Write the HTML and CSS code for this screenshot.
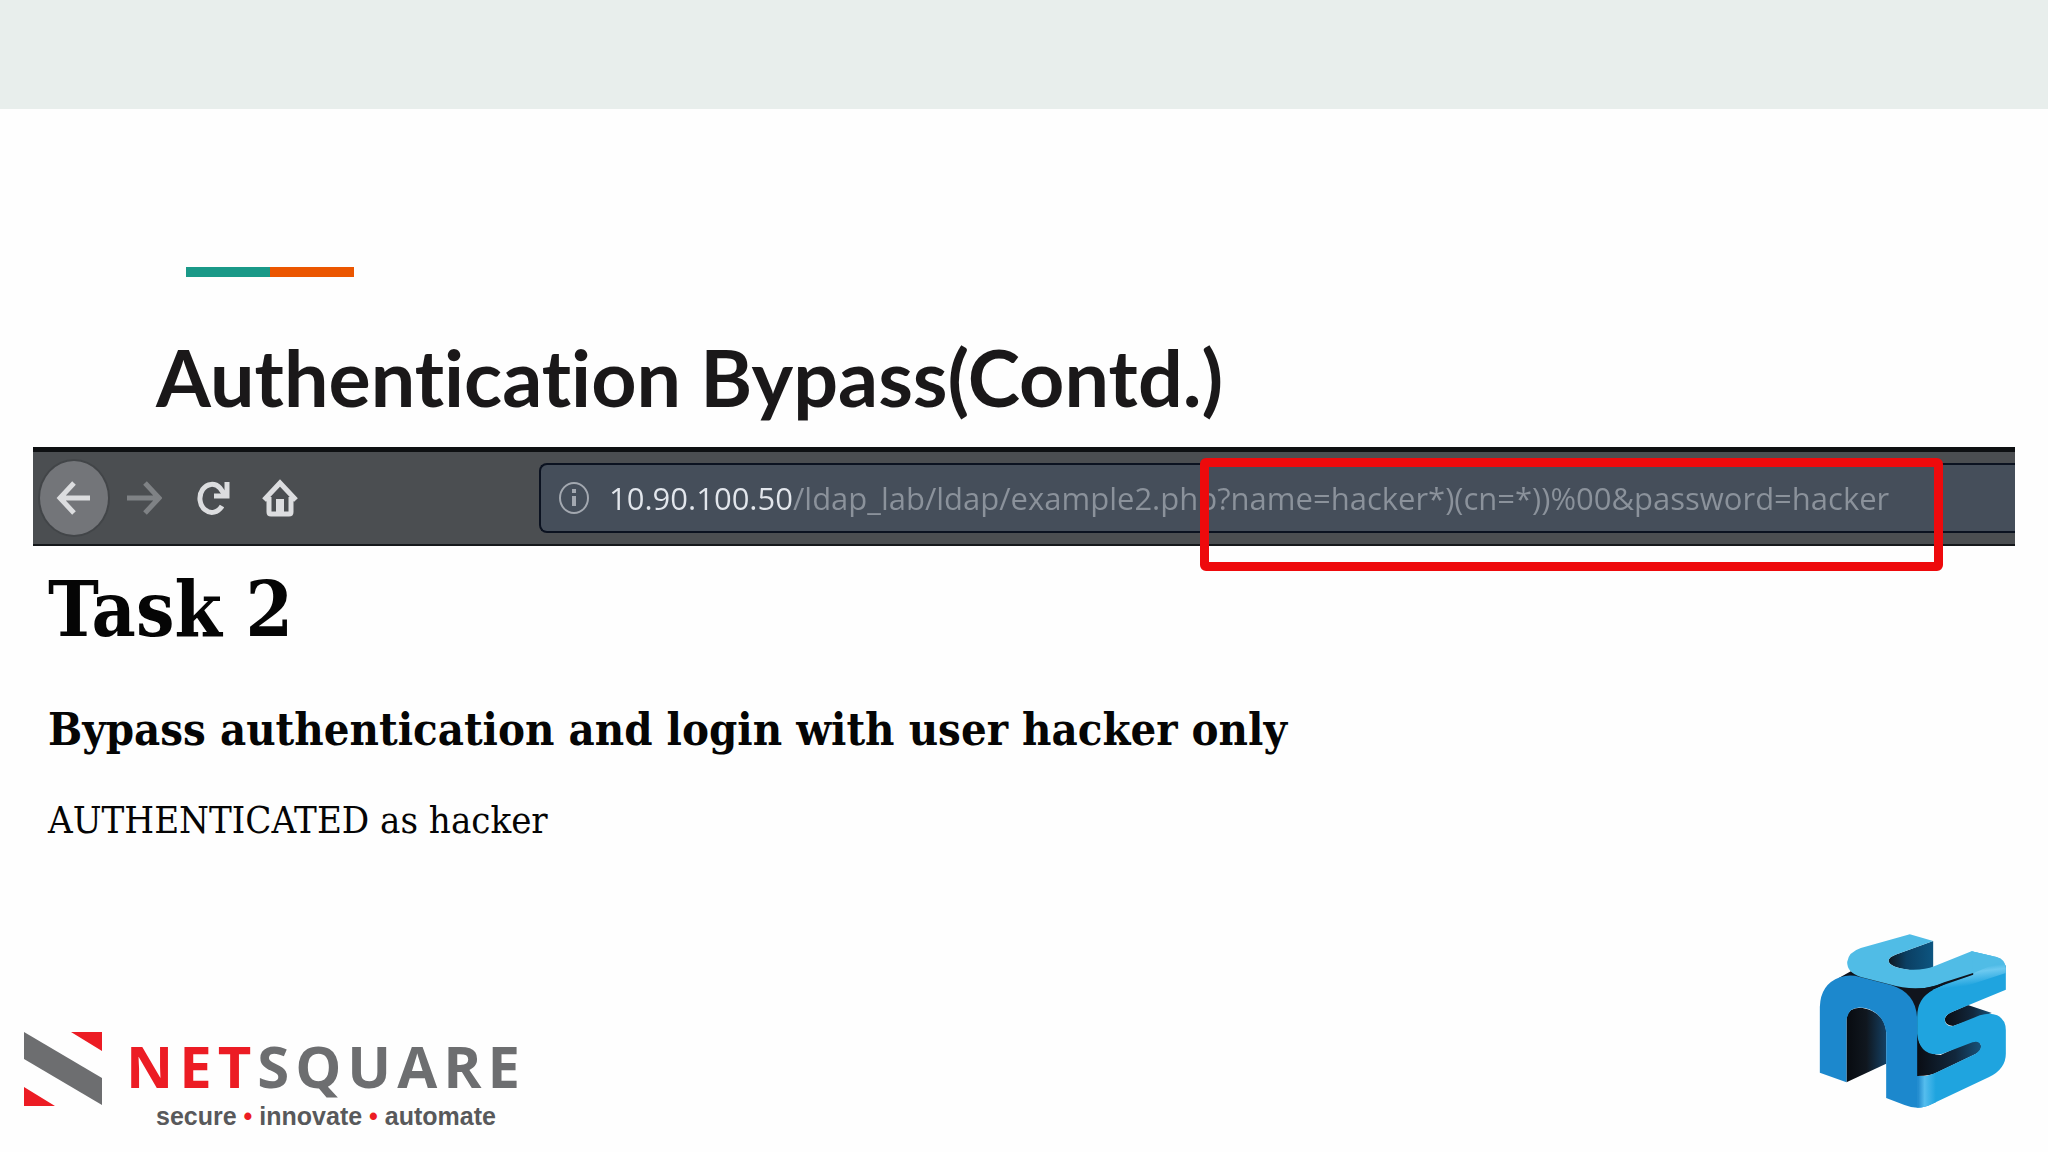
FILE: index.html
```html
<!DOCTYPE html>
<html lang="en">
<head>
  <meta charset="UTF-8">
  <meta name="viewport" content="width=device-width, initial-scale=1.0">
  <title>Authentication Bypass(Contd.)</title>
  <link rel="stylesheet" href="styles.css">
</head>
<body>
  <div class="slide">
    <div class="top-band"></div>

    <header class="slide-header">
      <div class="accent"></div>
      <h1 class="slide-title">Authentication Bypass(Contd.)</h1>
    </header>

    <main class="browser">
      <form class="toolbar">
        <button class="nav-btn back" type="button" aria-label="Back">
          <svg viewBox="0 0 36 36"><path d="M34 18H4M18 3L4 18l14 15"/></svg>
        </button>
        <button class="nav-btn forward" type="button" aria-label="Forward">
          <svg viewBox="0 0 36 36"><path d="M1 18h31M19 3l14 15-14 15"/></svg>
        </button>
        <button class="nav-btn reload" type="button" aria-label="Reload">
          <svg viewBox="0 0 36 36"><path d="M28 26A12 14 0 1 1 26 8l5 7"/><path d="M33 2v14H20"/><path class="solid" d="M33 8v8h-8z"/></svg>
        </button>
        <button class="nav-btn home" type="button" aria-label="Home">
          <svg viewBox="0 0 36 36"><path d="M2 20L18 3l16 17M7 17v15q0 2 2 2h18q2 0 2-2V17"/><path class="solid" d="M14 19h8v16h-8z"/></svg>
        </button>
        <div class="url-box">
          <svg class="info" viewBox="0 0 34 36"><ellipse cx="17" cy="18" rx="14" ry="15"/><path d="M17 16v10M17 9v4"/></svg>
          <input class="url-input" type="text" aria-label="Address" value="10.90.100.50/ldap_lab/ldap/example2.php?name=hacker*)(cn=*))%00&amp;password=hacker">
        </div>
      </form>
      <div class="highlight"></div>

      <section class="page">
        <h2 class="page-title">Task 2</h2>
        <h3 class="page-subtitle">Bypass authentication and login with user hacker only</h3>
        <p class="page-text">AUTHENTICATED as hacker</p>
      </section>
    </main>

    <footer class="slide-footer">
      <div class="netsquare">
        <svg class="netsquare-mark" viewBox="0 0 78 74">
          <path fill="#6d6e70" d="M0 0l78 46v27L0 27z"/>
          <path fill="#ec1c24" d="M47 0h31v19zM0 55l31 19H0z"/>
        </svg>
        <div class="netsquare-text">
          <div class="netsquare-name"><span class="red">NET</span>SQUARE</div>
          <div class="netsquare-tagline">secure <span class="red">•</span> innovate <span class="red">•</span> automate</div>
        </div>
      </div>

      <svg class="cube" viewBox="88 68 567 528">
        <defs>
          <linearGradient id="arch" x1="0" x2="1"><stop offset="0" stop-color="#080b10"/><stop offset=".5" stop-color="#10171f"/><stop offset="1" stop-color="#144064"/></linearGradient>
          <linearGradient id="cup" x1="0" x2="1"><stop offset="0" stop-color="#101820"/><stop offset=".4" stop-color="#0b3f63"/><stop offset="1" stop-color="#0d5580"/></linearGradient>
          <linearGradient id="gap" x1="0" x2="1"><stop offset="0" stop-color="#0a0d14"/><stop offset=".6" stop-color="#12283d"/><stop offset="1" stop-color="#17527a"/></linearGradient>
          <linearGradient id="edge" x1="0" x2="1"><stop offset="0" stop-color="#1b84ca"/><stop offset=".4" stop-color="#55bdee"/><stop offset="1" stop-color="#1fa4df"/></linearGradient>
          <linearGradient id="bend" x1=".4" y1="0" x2=".6" y2="1"><stop offset="0" stop-color="#52bde7"/><stop offset=".4" stop-color="#4fbbe6"/><stop offset=".5" stop-color="#6cc9f0"/><stop offset=".8" stop-color="#1fa4df"/></linearGradient>
        </defs>
        <path fill="#10141d" d="M150 202l35-19 120 25 247-20v10L425 260l-36 50v190h-20V300z"/>
        <path fill="url(#gap)" d="M384 380q15 50 70 54l90-42q28-6 32 15 0 17-18 25l-112 53q-20 12-62 12z"/>
        <path fill="url(#gap)" d="M536 284l72 24-116 39q-25-2-25-20 2-15 23-23z"/>
        <path fill="url(#arch)" d="M172 516V325q4-35 45-33 66 10 74 70v98z"/>
        <path fill="#1c88cd" d="M92 487V290q2-68 60-89 30-10 60-1l93 24q79 24 79 106v262q-18 0-38-8l-55-21V365q-8-58-64-72-50-9-55 37v186z"/>
        <path fill="url(#cup)" d="M432 92v80q-30 10-70 7-60-8-64-27 0-14 37-25z"/>
        <path fill="#1fa4df" d="M650 165v73l-160 66q-25 11-23 26 3 20 25 17l80-32q30-10 52 0 26 12 26 45v70q0 45-50 70l-170 80q-23 12-46 12v-95h21q15 0 35-10l120-57q18-12 15-25-5-15-25-9l-90 34q-68 12-76-60v-50q0-55 46-80l122-60z"/>
        <path fill="url(#edge)" d="M384 497h21q15 0 35-10v89l-10 4q-23 12-46 12z"/>
        <path fill="url(#bend)" d="M547 123l75 17q28 7 28 35v13l-190 62-30-12 122-46z"/>
        <path fill="#50bce6" d="M362 72l70 20-97 35q-37 11-37 25 4 20 62 26 46 2 75-10l112-45 60 14-55 53-113 36q-65 18-139-4l-85-22q-42-14-41-45 4-30 41-42z"/>
        <path fill="#50bce6" d="M547 123l75 17q10 3 16 11l-86 38z"/>
        <path fill="#10141d" d="M380 236q40 0 85-20l87-28v5l-92 32q-36 12-54 32z"/>
      </svg>
    </footer>
  </div>
</body>
</html>
```
FILE: styles.css
```css
* {
  margin: 0;
  padding: 0;
  box-sizing: border-box;
}

body {
  background: #fefefe;
  color: #1a1819;
}

.slide {
  display: flex;
  flex-direction: column;
  min-height: 100vh;
}

.top-band {
  height: 109px;
  background: #e8eeec;
}

.slide-header {
  padding: 158px 156px 0;
}

.accent {
  width: 168px;
  height: 10px;
  margin-left: 30px;
  background: linear-gradient(90deg, #1a9988 50%, #eb5600 50%);
}

.slide-title {
  margin-top: 54px;
  font-family: Lato, sans-serif;
  font-size: 79px;
  font-weight: 700;
  font-variant-ligatures: none;
  line-height: 92px;
}

/* browser window */
.browser {
  position: relative;
  margin: 24px 33px 0;
}

.toolbar {
  display: flex;
  align-items: center;
  height: 99px;
  padding-left: 7px;
  background: #4b4e51;
  border-top: 5px solid #0e1012;
  border-bottom: 2px solid #15181b;
}

.nav-btn {
  display: flex;
  align-items: center;
  justify-content: center;
  width: 68px;
  height: 74px;
  border: none;
  border-radius: 50%;
  background: none;
  color: #dcdddf;
}

.nav-btn svg {
  width: 36px;
  height: 38px;
  fill: none;
  stroke: currentColor;
  stroke-width: 5;
}

.nav-btn .solid {
  fill: currentColor;
  stroke: none;
}

.back {
  background: #737579;
  box-shadow: 0 0 0 2px #424548;
}

.forward {
  margin-left: 2px;
  color: #7f8285;
}

.home {
  margin-right: 225px;
}

.url-box {
  display: flex;
  flex: 1;
  align-items: center;
  gap: 18px;
  height: 70px;
  padding-left: 16px;
  background: #454e5a;
  border: 2px solid #0b1220;
  border-right: none;
  border-radius: 8px 0 0 8px;
}

.info {
  width: 34px;
  height: 36px;
  fill: none;
  stroke: #a3a8b0;
  stroke-width: 2;
}

.info path {
  stroke-width: 4;
}

/* the host part of the address is brighter than the path */
.url-input {
  flex: 1;
  min-width: 0;
  height: 60px;
  border: none;
  outline: none;
  background: linear-gradient(90deg, #e2e6ec 184px, #8b929b 184px);
  -webkit-background-clip: text;
  background-clip: text;
  color: transparent;
  font-family: "Open Sans", sans-serif;
  font-size: 31px;
}

.highlight {
  position: absolute;
  top: 11px;
  left: 1167px;
  width: 743px;
  height: 113px;
  border: 9px solid #ee0a0c;
  border-radius: 6px;
}

.page {
  padding: 20px 15px;
  color: #050505;
  font-family: "DejaVu Serif Condensed", "DejaVu Serif", serif;
}

.page-title {
  font-size: 76px;
  line-height: 88px;
}

.page-subtitle {
  margin-top: 48px;
  font-size: 45px;
  line-height: 56px;
}

.page-text {
  margin-top: 38px;
  font-size: 38px;
  line-height: 48px;
}

.slide-footer {
  display: flex;
  align-items: flex-end;
  justify-content: space-between;
  margin-top: auto;
  padding: 0 40px 22px 24px;
}

.netsquare {
  display: flex;
  gap: 24px;
}

.netsquare-mark {
  width: 78px;
  height: 74px;
  margin-top: 2px;
}

.netsquare-text {
  display: flex;
  flex-direction: column;
  align-items: center;
}

.netsquare-name {
  color: #6d6e70;
  font-family: "Open Sans", sans-serif;
  font-size: 58px;
  font-weight: 700;
  line-height: 72px;
  letter-spacing: 6px;
}

.netsquare-tagline {
  color: #58595b;
  font-family: "Liberation Sans", sans-serif;
  font-size: 25px;
  font-weight: 700;
  line-height: 28px;
}

.red {
  color: #ec1c24;
}

.cube {
  width: 190px;
  height: 176px;
  margin-bottom: 21px;
}
```
